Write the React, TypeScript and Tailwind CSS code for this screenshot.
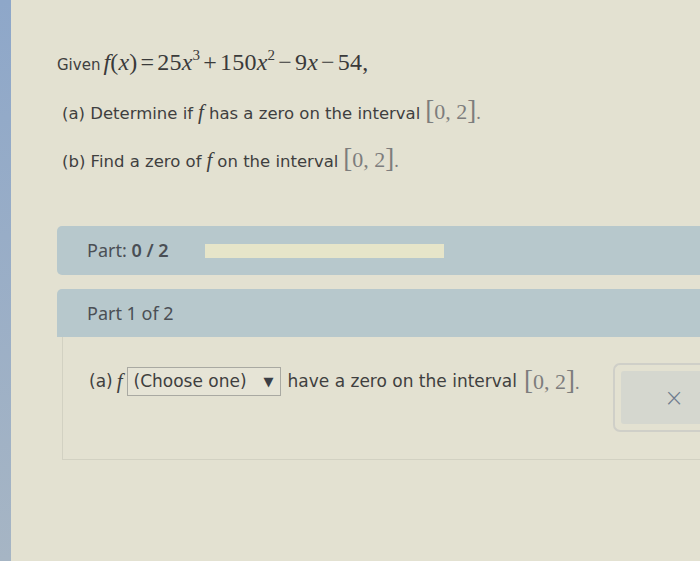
import React from 'react';

const sans = { fontFamily: '"DejaVu Sans", Verdana, sans-serif' };
const serif = { fontFamily: '"Liberation Serif", "Times New Roman", serif' };
const ui = { fontFamily: '"Noto Sans", "Open Sans", sans-serif' };

function Interval() {
  return (
    <span className="text-[#7d7d7d] text-[22px] leading-none" style={serif}>
      <span className="text-[27px] font-light">[</span>0, 2<span className="text-[27px] font-light">]</span>
      <span className="text-[18px]">.</span>
    </span>
  );
}

function F() {
  return (
    <span className="italic text-[21px]" style={serif}>
      f
    </span>
  );
}

function Op({ children }: { children: React.ReactNode }) {
  return <span className="mx-[3px]">{children}</span>;
}

export default function App() {
  return (
    <div className="w-[700px] h-[561px] overflow-hidden flex bg-[#e3e1d1] text-[#3f3f3f]" style={sans}>
      {/* left rail */}
      <div className="w-[11px] shrink-0 bg-gradient-to-b from-[#8ea7c9] to-[#a6b5c4]" />

      <div className="flex-1 flex flex-col pl-[46px]">
        {/* problem statement */}
        <div className="pt-[44px] flex items-baseline text-[15px]">
          <span className="mr-[3px]">Given</span>
          <span className="text-[24px] text-[#3a3a3a] tracking-[0.2px]" style={serif}>
            <i>f</i>(<i>x</i>)<Op>=</Op>25<i>x</i>
            <sup className="text-[15px] relative -top-[10px]">3</sup>
            <Op>+</Op>150<i>x</i>
            <sup className="text-[15px] relative -top-[10px]">2</sup>
            <Op>−</Op>9<i>x</i>
            <Op>−</Op>54,
          </span>
        </div>

        <div className="pl-[5px] pt-[17px] flex items-baseline gap-[5px] text-[16.5px]">
          <span>(a) Determine if</span>
          <F />
          <span>has a zero on the interval</span>
          <Interval />
        </div>

        <div className="pl-[5px] pt-[16px] flex items-baseline gap-[5px] text-[16.5px]">
          <span>(b) Find a zero of</span>
          <F />
          <span>on the interval</span>
          <Interval />
        </div>

        {/* progress bar */}
        <div
          className="mt-[50px] h-[49px] rounded-l-[5px] bg-[#b7c8cc] flex items-center pl-[30px] text-[18px] text-[#4a4f55]"
          style={ui}
        >
          <span className="w-[118px] whitespace-pre">
            Part: <b className="font-semibold">0 / 2</b>
          </span>
          <div className="w-[239px] h-[14px] bg-[#e6e5c9]" />
        </div>

        {/* part header */}
        <div
          className="mt-[14px] h-[48px] rounded-tl-[5px] bg-[#b7c8cc] flex items-center pl-[30px] text-[18px] text-[#4a4f55]"
          style={ui}
        >
          Part 1 of 2
        </div>

        {/* answer area */}
        <div className="ml-[5px] h-[123px] border-l border-b border-[#d2d1c2] flex items-start pt-[29px]">
          <div className="pl-[26px] flex items-center text-[17px]">
            <span>(a)</span>
            <span className="ml-[4px] mr-[4px]">
              <F />
            </span>
            <div className="w-[154px] h-[29px] border border-[#a9a9a2] bg-[#e6e4d6] flex items-center justify-between pl-[6px] pr-[6px]">
              <span>(Choose one)</span>
              <span className="text-[13px] text-[#3b3f46]">▼</span>
            </div>
            <span className="ml-[7px]">have a zero on the interval</span>
            <span className="ml-[7px]">
              <Interval />
            </span>
          </div>
          <div className="ml-auto -mt-[3px] w-[87px] h-[69px] rounded-l-[7px] border-2 border-r-0 border-[#cfcfc8] p-[6px] pr-0">
            <div className="w-full h-full bg-[#d5d7cf] rounded-l-[3px] flex items-center justify-end pr-[16px] text-[#6f7c8e] text-[24px] font-light">
              ×
            </div>
          </div>
        </div>
      </div>
    </div>
  );
}
